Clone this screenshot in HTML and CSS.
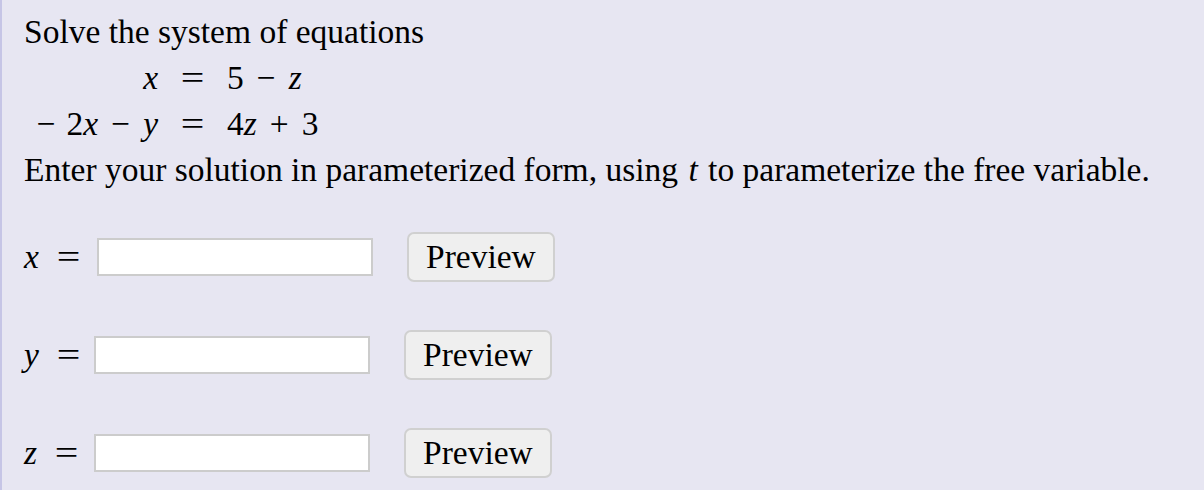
FILE: index.html
```html
<!DOCTYPE html>
<html>
<head>
<meta charset="utf-8">
<link rel="stylesheet" href="styles.css">
</head>
<body>
<div class="problem">
  <p class="line">Solve the system of equations</p>
  <div class="system">
    <span class="lhs"><i>x</i></span>
    <span class="eq"><span class="eqsign">=</span></span>
    <span class="rhs">5<span class="bin">−</span><i>z</i></span>
    <span class="lhs"><span class="neg">−</span>2<i>x</i><span class="bin">−</span><i>y</i></span>
    <span class="eq"><span class="eqsign">=</span></span>
    <span class="rhs">4<i>z</i><span class="bin">+</span>3</span>
  </div>
  <p class="line">Enter your solution in parameterized form, using <i class="tvar">t</i> to parameterize the free variable.</p>
  <div class="answers">
    <div class="row">
      <span class="label label-wide"><i>x</i><span class="eqsign rel">=</span></span>
      <input class="field" type="text">
      <button class="preview" type="button">Preview</button>
    </div>
    <div class="row">
      <span class="label"><i>y</i><span class="eqsign rel">=</span></span>
      <input class="field" type="text">
      <button class="preview" type="button">Preview</button>
    </div>
    <div class="row">
      <span class="label"><i>z</i><span class="eqsign rel">=</span></span>
      <input class="field" type="text">
      <button class="preview" type="button">Preview</button>
    </div>
  </div>
</div>
</body>
</html>
```
FILE: styles.css
```css
body {
  margin: 0;
  background: #e7e6f2;
  font-family: "Liberation Serif", "Times New Roman", serif;
  font-size: 33.5px;
  color: #000;
}
.problem {
  border-left: 2px solid #c6c5e6;
  min-height: 490px;
  box-sizing: border-box;
  padding: 9px 0 0 22px;
}
.line {
  margin: 0;
  line-height: 46px;
  white-space: nowrap;
}
.tvar {
  margin: 0 2px;
}
.system {
  display: grid;
  grid-template-columns: 126px 23px auto;
  column-gap: 23px;
  margin-left: 8px;
  line-height: 46px;
}
.lhs {
  text-align: right;
}
.eq {
  text-align: center;
}
.eqsign {
  display: inline-block;
  transform: scaleX(1.25);
}
.neg {
  margin-right: 11px;
}
.bin {
  margin: 0 13px;
}
.answers {
  display: flex;
  flex-direction: column;
  gap: 48px;
  margin-top: 39px;
}
.row {
  display: flex;
  align-items: center;
  height: 50px;
}
.label {
  display: block;
  width: 70px;
  white-space: nowrap;
}
.label-wide {
  width: 73px;
}
.rel {
  margin-left: 20px;
}
.field {
  box-sizing: border-box;
  width: 276px;
  height: 38px;
  border: 2px solid #cccccc;
  background: #fff;
  margin: 0;
  padding: 0;
}
.preview {
  box-sizing: border-box;
  margin-left: 34px;
  height: 50px;
  padding: 0 17px;
  font-family: "Liberation Serif", "Times New Roman", serif;
  font-size: 33.5px;
  color: #000;
  background: #efefef;
  border: 2px solid #d0d0d0;
  border-radius: 7px;
}
```
